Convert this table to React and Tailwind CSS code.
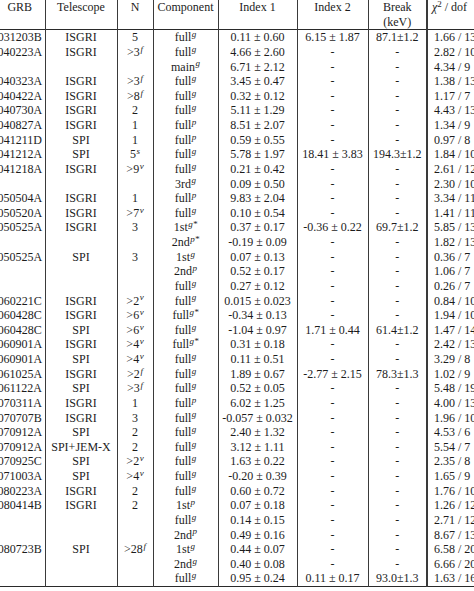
import React from "react";

const Sup = ({ children }) => (
  <sup className="italic text-[9px] top-[-0.45em] ml-[0.5px]">{children}</sup>
);

const N = ({ v, s }) => (
  <>
    {v}
    {s && <Sup>{s}</Sup>}
  </>
);

const rows = [
  ["031203B", "ISGRI", ["5"], ["full", "g"], "0.11 ± 0.60", "6.15 ± 1.87", "87.1±1.2", "1.66 / 13"],
  ["040223A", "ISGRI", [">3", "f"], ["full", "g"], "4.66 ± 2.60", "-", "-", "2.82 / 10"],
  ["", "", null, ["main", "g"], "6.71 ± 2.12", "-", "-", "4.34 / 9"],
  ["040323A", "ISGRI", [">3", "f"], ["full", "g"], "3.45 ± 0.47", "-", "-", "1.38 / 13"],
  ["040422A", "ISGRI", [">8", "f"], ["full", "g"], "0.32 ± 0.12", "-", "-", "1.17 / 7"],
  ["040730A", "ISGRI", ["2"], ["full", "g"], "5.11 ± 1.29", "-", "-", "4.43 / 13"],
  ["040827A", "ISGRI", ["1"], ["full", "p"], "8.51 ± 2.07", "-", "-", "1.34 / 9"],
  ["041211D", "SPI", ["1"], ["full", "p"], "0.59 ± 0.55", "-", "-", "0.97 / 8"],
  ["041212A", "SPI", ["5", "s"], ["full", "g"], "5.78 ± 1.97", "18.41 ± 3.83", "194.3±1.2", "1.84 / 10"],
  ["041218A", "ISGRI", [">9", "v"], ["full", "g"], "0.21 ± 0.42", "-", "-", "2.61 / 12"],
  ["", "", null, ["3rd", "g"], "0.09 ± 0.50", "-", "-", "2.30 / 10"],
  ["050504A", "ISGRI", ["1"], ["full", "p"], "9.83 ± 2.04", "-", "-", "3.34 / 11"],
  ["050520A", "ISGRI", [">7", "v"], ["full", "g"], "0.10 ± 0.54", "-", "-", "1.41 / 11"],
  ["050525A", "ISGRI", ["3"], ["1st", "g*"], "0.37 ± 0.17", "-0.36 ± 0.22", "69.7±1.2", "5.85 / 13"],
  ["", "", null, ["2nd", "p*"], "-0.19 ± 0.09", "-", "-", "1.82 / 13"],
  ["050525A", "SPI", ["3"], ["1st", "g"], "0.07 ± 0.13", "-", "-", "0.36 / 7"],
  ["", "", null, ["2nd", "p"], "0.52 ± 0.17", "-", "-", "1.06 / 7"],
  ["", "", null, ["full", "g"], "0.27 ± 0.12", "-", "-", "0.26 / 7"],
  ["060221C", "ISGRI", [">2", "v"], ["full", "g"], "0.015 ± 0.023", "-", "-", "0.84 / 10"],
  ["060428C", "ISGRI", [">6", "v"], ["full", "g*"], "-0.34 ± 0.13", "-", "-", "1.94 / 10"],
  ["060428C", "SPI", [">6", "v"], ["full", "g"], "-1.04 ± 0.97", "1.71 ± 0.44", "61.4±1.2", "1.47 / 14"],
  ["060901A", "ISGRI", [">4", "v"], ["full", "g*"], "0.31 ± 0.18", "-", "-", "2.42 / 13"],
  ["060901A", "SPI", [">4", "v"], ["full", "g"], "0.11 ± 0.51", "-", "-", "3.29 / 8"],
  ["061025A", "ISGRI", [">2", "f"], ["full", "g"], "1.89 ± 0.67", "-2.77 ± 2.15", "78.3±1.3", "1.02 / 9"],
  ["061122A", "SPI", [">3", "f"], ["full", "g"], "0.52 ± 0.05", "-", "-", "5.48 / 19"],
  ["070311A", "ISGRI", ["1"], ["full", "p"], "6.02 ± 1.25", "-", "-", "4.00 / 13"],
  ["070707B", "ISGRI", ["3"], ["full", "g"], "-0.057 ± 0.032", "-", "-", "1.96 / 10"],
  ["070912A", "SPI", ["2"], ["full", "g"], "2.40 ± 1.32", "-", "-", "4.53 / 6"],
  ["070912A", "SPI+JEM-X", ["2"], ["full", "g"], "3.12 ± 1.11", "-", "-", "5.54 / 7"],
  ["070925C", "SPI", [">2", "v"], ["full", "g"], "1.63 ± 0.22", "-", "-", "2.35 / 8"],
  ["071003A", "SPI", [">4", "v"], ["full", "g"], "-0.20 ± 0.39", "-", "-", "1.65 / 9"],
  ["080223A", "ISGRI", ["2"], ["full", "g"], "0.60 ± 0.72", "-", "-", "1.76 / 10"],
  ["080414B", "ISGRI", ["2"], ["1st", "p"], "0.07 ± 0.18", "-", "-", "1.26 / 12"],
  ["", "", null, ["full", "g"], "0.14 ± 0.15", "-", "-", "2.71 / 12"],
  ["", "", null, ["2nd", "p"], "0.49 ± 0.16", "-", "-", "8.67 / 13"],
  ["080723B", "SPI", [">28", "f"], ["1st", "g"], "0.44 ± 0.07", "-", "-", "6.58 / 20"],
  ["", "", null, ["2nd", "g"], "0.40 ± 0.08", "-", "-", "6.66 / 20"],
  ["", "", null, ["full", "g"], "0.95 ± 0.24", "0.11 ± 0.17", "93.0±1.3", "1.63 / 16"],
];

const cell = "p-0 text-center whitespace-nowrap border-r border-[#3a3a3a]";

export default function App() {
  return (
    <div className="w-[474px] h-[591px] overflow-hidden bg-white text-[#1c1c1c] font-['Liberation_Serif',serif] text-[12px] leading-[14.63px]">
      <table className="table-fixed border-collapse -ml-[5px] w-[488px]">
        <colgroup>
          <col className="w-[50px]" />
          <col className="w-[72px]" />
          <col className="w-[36px]" />
          <col className="w-[65px]" />
          <col className="w-[79px]" />
          <col className="w-[71px]" />
          <col className="w-[59px]" />
          <col className="w-[56px]" />
        </colgroup>
        <thead>
          <tr className="h-[28px] align-top border-b border-[#2a2a2a] font-normal">
            <th className={cell + " font-normal"}>GRB</th>
            <th className={cell + " font-normal"}>Telescope</th>
            <th className={cell + " font-normal"}>N</th>
            <th className={cell + " font-normal"}>Component</th>
            <th className={cell + " font-normal"}>Index 1</th>
            <th className={cell + " font-normal"}>Index 2</th>
            <th className={cell + " font-normal border-r-2"}>
              Break
              <br />
              (keV)
            </th>
            <th className="p-0 pl-[4px] text-left whitespace-nowrap font-normal">
              <span className="italic">χ</span>
              <sup className="text-[9px] top-[-0.5em]">2</sup> / dof
            </th>
          </tr>
        </thead>
        <tbody className="border-b border-[#2a2a2a]">
          {rows.map((r, i) => (
            <tr key={i} className="h-[14.63px]">
              <td className={cell}>{r[0]}</td>
              <td className={cell}>{r[1]}</td>
              <td className={cell}>{r[2] && <N v={r[2][0]} s={r[2][1]} />}</td>
              <td className={cell}>
                <N v={r[3][0]} s={r[3][1]} />
              </td>
              <td className={cell}>{r[4]}</td>
              <td className={cell}>{r[5]}</td>
              <td className={cell + " border-r-2"}>{r[6]}</td>
              <td className="p-0 pl-[6px] text-left whitespace-nowrap">{r[7]}</td>
            </tr>
          ))}
        </tbody>
      </table>
    </div>
  );
}
